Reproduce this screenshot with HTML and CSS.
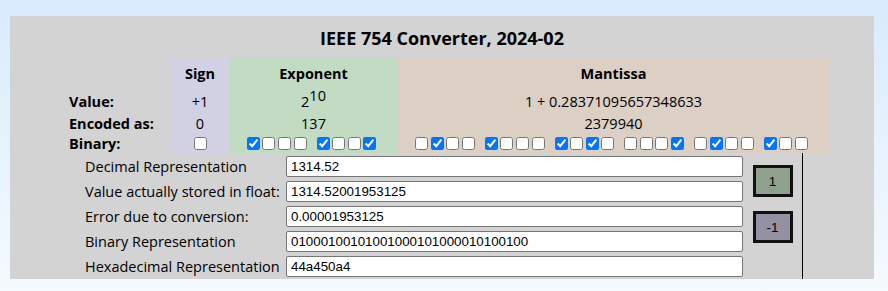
FILE: index.html
```html
<!DOCTYPE html>
<html lang="en">
<head>
    <meta charset="UTF-8">
    <title>IEEE 754 Converter</title>
    <link rel="stylesheet" href="styles.css">
</head>
<body>
    <div class="panel">
        <h2 class="title">IEEE 754 Converter, 2024-02</h2>

        <table class="bits">
            <tr class="head">
                <td class="lbl"></td>
                <th class="sign">Sign</th>
                <th class="exp">Exponent</th>
                <th class="man">Mantissa</th>
            </tr>
            <tr class="value">
                <td class="lbl">Value:</td>
                <td class="sign">+1</td>
                <td class="exp">2<sup>10</sup></td>
                <td class="man">1 + 0.28371095657348633</td>
            </tr>
            <tr class="enc">
                <td class="lbl">Encoded as:</td>
                <td class="sign">0</td>
                <td class="exp">137</td>
                <td class="man">2379940</td>
            </tr>
            <tr class="bin">
                <td class="lbl">Binary:</td>
                <td class="sign"><div class="boxes" id="sign-bits"></div></td>
                <td class="exp"><div class="boxes" id="exp-bits"></div></td>
                <td class="man"><div class="boxes" id="man-bits"></div></td>
            </tr>
        </table>

        <div class="form">
            <div class="fields">
                <label>Decimal Representation</label>
                <input type="text" value="1314.52">
                <label>Value actually stored in float:</label>
                <input type="text" value="1314.52001953125">
                <label>Error due to conversion:</label>
                <input type="text" value="0.00001953125">
                <label>Binary Representation</label>
                <input type="text" value="01000100101001000101000010100100">
                <label>Hexadecimal Representation</label>
                <input type="text" value="44a450a4">
            </div>
            <div class="steps">
                <button class="step plus">1</button>
                <button class="step minus">-1</button>
            </div>
        </div>
    </div>

    <script>
    const bits = "01000100101001000101000010100100";

    // group bits in fours, same as the original converter
    function fill(id, str) {
      const box = document.getElementById(id);
      for (let i = 0; i < str.length; i += 4) {
        const g = document.createElement("span");
        g.className = "grp";
        for (const b of str.slice(i, i + 4)) {
          const c = document.createElement("input");
          c.type = "checkbox";
          c.checked = b === "1";
          g.appendChild(c);
        }
        box.appendChild(g);
      }
    }

    fill("sign-bits", bits.slice(0, 1));
    fill("exp-bits", bits.slice(1, 9));
    fill("man-bits", bits.slice(9));
    </script>
</body>
</html>
```

FILE: styles.css
```css
body {
  margin: 0;
  padding: 16px 14px 12px 10px;
  min-height: 291px;
  box-sizing: border-box;
  background: linear-gradient(#d8ebfc, #f5fafe);
  font-family: "Open Sans", "Noto Sans", sans-serif;
  font-size: 14.5px;
  color: #000;
}

.panel {
  width: 864px;
  height: 263px;
  background: #d3d3d3;
  overflow: hidden;
}

.title {
  margin: 0;
  padding-top: 10px;
  height: 31px;
  line-height: 24px;
  font-size: 18px;
  font-weight: 700;
  text-align: center;
}

.bits {
  margin-left: 55px;
  width: 765px;
  border-collapse: collapse;
  table-layout: fixed;
}

.bits td, .bits th {
  padding: 0;
  text-align: center;
  vertical-align: middle;
}

.bits .lbl { width: 101px; text-align: left; padding-left: 4px; font-weight: 700; }
.bits .sign { width: 60px; background: #d1d1e3; }
.bits .exp { width: 167px; background: #c1dcc2; }
.bits .man { background: #dcd0c5; }

.bits th { font-weight: 700; }

.head { height: 33px; }
.value { height: 23px; }
.enc { height: 21px; }
.bin { height: 19px; }

.value sup {
  font-size: 100%;
  vertical-align: 6px;
  line-height: 0;
}

.boxes {
  display: flex;
  justify-content: center;
  gap: 10px;
}

.exp .boxes, .man .boxes { padding-right: 4px; }

.grp {
  display: flex;
  gap: 2.6px;
}

.grp input {
  margin: 0;
  width: 13px;
  height: 13px;
}

.form {
  margin-left: 75px;
  width: 717px;
  height: 126px;
  border-right: 1px solid #000;
  display: flex;
}

.fields {
  display: grid;
  grid-template-columns: 201px 457px;
  row-gap: 4px;
  padding-top: 3px;
  align-content: start;
  align-items: center;
}

.fields label {
  white-space: nowrap;
}

.fields input {
  height: 21px;
  box-sizing: border-box;
  margin: 0;
  padding: 1px 4px;
  border: 1px solid #767676;
  border-radius: 2px;
  background: #fff;
  font-family: "Liberation Sans", Arial, sans-serif;
  font-size: 13.33px;
  color: #000;
}

.steps {
  flex: 1;
  display: flex;
  flex-direction: column;
  align-items: center;
  gap: 14px;
  padding-top: 12px;
}

.step {
  width: 40px;
  height: 32px;
  border: 3px solid #111;
  font-family: "Liberation Sans", Arial, sans-serif;
  font-size: 13.33px;
  color: #000;
  padding: 0;
}

.plus { background: #8fa08f; }
.minus { background: #9391a2; }
```
